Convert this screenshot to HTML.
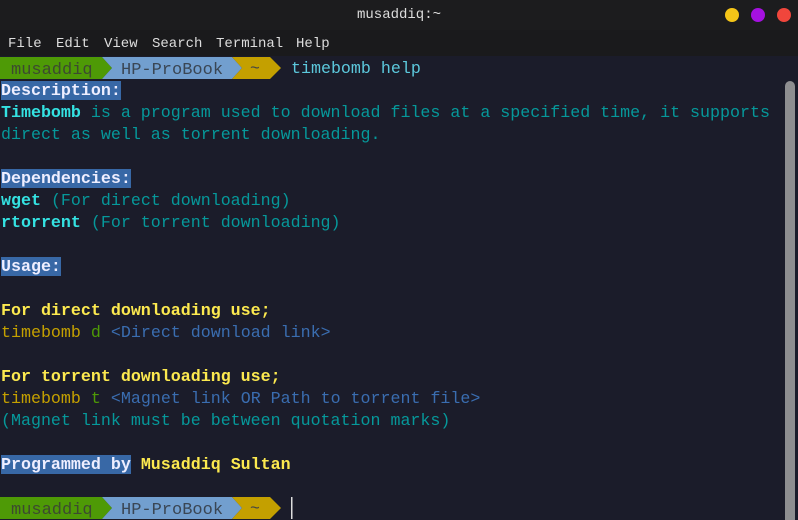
<!DOCTYPE html>
<html><head><meta charset="utf-8"><style>
*{margin:0;padding:0;box-sizing:border-box}
body{width:798px;height:520px;background:#1b1c2a;overflow:hidden;position:relative;font-family:"Liberation Mono","DejaVu Sans Mono",monospace;font-size:16.65px}
#title{position:absolute;left:0;top:0;width:798px;height:30px;background:#1c1c1e;color:#ddd;text-align:center;line-height:30px;font-size:14px}
.dot{position:absolute;top:8px;width:14px;height:14px;border-radius:50%}
#menu{position:absolute;left:0;top:30px;width:798px;height:26px;background:#1a1a1c;color:#ddd;font-size:14px;line-height:28px}
#menu span{position:absolute;top:0}
.l{position:absolute;left:1px;height:22px;line-height:23px;white-space:pre}
.hl{background:#3868a6;color:#eef}
b{font-weight:bold}
.t{color:#06989a}.c{color:#34e2e2}.y{color:#fce94f}.o{color:#c4a000}.g{color:#4e9a06}.bl{color:#3a6db0}
.pr{position:absolute;left:0;height:22px}
#sb{position:absolute;left:785px;top:81px;width:10px;height:439px;background:#8e8e90;border-radius:5px 5px 0 0}
</style></head><body>
<div id="title">musaddiq:~</div>
<div class="dot" style="left:725px;background:#f5c518"></div>
<div class="dot" style="left:751px;background:#a511e0"></div>
<div class="dot" style="left:777px;background:#f0463c"></div>
<div id="menu"><span style="left:8px">File</span><span style="left:56px">Edit</span><span style="left:104px">View</span><span style="left:152px">Search</span><span style="left:216px">Terminal</span><span style="left:296px">Help</span></div>

<svg class="pr" style="top:57px" width="290" height="22"><polygon points="0,0 102,0 112,11 102,22 0,22" fill="#4e9a06"/><polygon points="102,0 232,0 242,11 232,22 102,22 112,11" fill="#729fcf"/><polygon points="232,0 270,0 281,11 270,22 232,22 242,11" fill="#c4a000"/>
<text x="11" y="17" font-family="Liberation Mono,monospace" font-size="17" fill="#3d4a30">musaddiq</text><text x="121" y="17" font-family="Liberation Mono,monospace" font-size="17" fill="#3a4654">HP-ProBook</text><text x="250" y="16" font-family="Liberation Mono,monospace" font-size="16.5" fill="#444">~</text></svg>
<div class="l t" style="top:57px;left:291px;color:#5cc8dc">timebomb help</div>
<div class="l" style="top:79px"><b class="hl">Description:</b></div>
<div class="l t" style="top:101px"><b class="c">Timebomb</b> is a program used to download files at a specified time, it supports</div>
<div class="l t" style="top:123px">direct as well as torrent downloading.</div>
<div class="l" style="top:167px"><b class="hl">Dependencies:</b></div>
<div class="l t" style="top:189px"><b class="c">wget</b> (For direct downloading)</div>
<div class="l t" style="top:211px"><b class="c">rtorrent</b> (For torrent downloading)</div>
<div class="l" style="top:255px"><b class="hl">Usage:</b></div>
<div class="l y" style="top:299px"><b>For direct downloading use;</b></div>
<div class="l" style="top:321px"><span class="o">timebomb</span> <span class="g">d</span> <span class="bl">&lt;Direct download link&gt;</span></div>
<div class="l y" style="top:365px"><b>For torrent downloading use;</b></div>
<div class="l" style="top:387px"><span class="o">timebomb</span> <span class="g">t</span> <span class="bl">&lt;Magnet link OR Path to torrent file&gt;</span></div>
<div class="l t" style="top:409px">(Magnet link must be between quotation marks)</div>
<div class="l" style="top:453px"><b class="hl">Programmed by</b><b class="y"> Musaddiq Sultan</b></div>
<svg class="pr" style="top:497px" width="300" height="22"><polygon points="0,0 102,0 112,11 102,22 0,22" fill="#4e9a06"/><polygon points="102,0 232,0 242,11 232,22 102,22 112,11" fill="#729fcf"/><polygon points="232,0 270,0 281,11 270,22 232,22 242,11" fill="#c4a000"/>
<text x="11" y="17" font-family="Liberation Mono,monospace" font-size="17" fill="#3d4a30">musaddiq</text><text x="121" y="17" font-family="Liberation Mono,monospace" font-size="17" fill="#3a4654">HP-ProBook</text><text x="250" y="16" font-family="Liberation Mono,monospace" font-size="16.5" fill="#444">~</text><rect x="291" y="0" width="1.5" height="22" fill="#ddd"/></svg>
<div id="sb"></div>
</body></html>
